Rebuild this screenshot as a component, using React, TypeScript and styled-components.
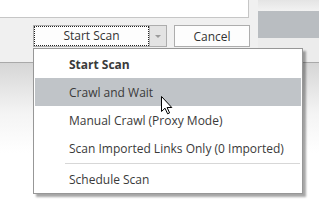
import React from "react";
import styled, { createGlobalStyle } from "styled-components";

const Global = createGlobalStyle`
  html, body { margin: 0; padding: 0; }
  body { width: 319px; height: 209px; overflow: hidden; background: #f0f0f0; }
  #root { width: 319px; height: 209px; }
`;

const Page = styled.div`
  position: relative;
  width: 319px;
  height: 209px;
  display: flex;
  flex-direction: column;
  font-family: "Open Sans", "Noto Sans", sans-serif;
  color: #333;
  overflow: hidden;
`;

const Upper = styled.div`
  display: flex;
  height: 62px;
  background: #f0f0f0;
`;

const MainCol = styled.div`
  width: 258px;
  display: flex;
  flex-direction: column;
`;

const TopPanel = styled.div`
  width: 248px;
  height: 17px;
  background: #fff;
  border-right: 1px solid #c6c6c6;
  border-bottom: 1px solid #c6c6c6;
`;

const ButtonRow = styled.div`
  display: flex;
  gap: 7px;
  margin-top: 7px;
  padding-left: 33px;
`;

const Split = styled.div`
  display: flex;
  height: 20px;
  border: 1px solid #adadad;
`;

const MainBtn = styled.div`
  width: 113px;
  margin: 0;
  border: 1px dotted #222;
  background: #fdfdfd;
  display: flex;
  align-items: center;
  justify-content: center;
  font-size: 12px;
  line-height: 1;
  color: #333;
`;

const ArrowBtn = styled.div`
  width: 16px;
  border-left: 1px solid #adadad;
  background: #e3e3e3;
  display: flex;
  align-items: center;
  justify-content: center;
`;

const Triangle = styled.div`
  width: 0;
  height: 0;
  border-left: 3px solid transparent;
  border-right: 3px solid transparent;
  border-top: 3px solid #9a9a9a;
  margin-top: 1px;
`;

const PlainBtn = styled.div`
  width: 74px;
  height: 20px;
  border: 1px solid #adadad;
  background: #fdfdfd;
  display: flex;
  align-items: center;
  justify-content: center;
  font-size: 12px;
  color: #333;
`;

const SidePanel = styled.div`
  flex: 1;
  display: flex;
  flex-direction: column;
`;

const SideTop = styled.div`
  height: 11px;
  background: linear-gradient(#e4e4e4, #f2f2f2);
`;

const SideBand = styled.div`
  height: 27px;
  background: #b9bdc1;
`;

const SideRest = styled.div`
  flex: 1;
  background: #ececec;
`;

const Lower = styled.div`
  flex: 1;
  border-top: 1px solid #a9a9a9;
  background: linear-gradient(#d6d6d6 0px, #f4f4f4 50px, #ffffff 90px);
`;

const Menu = styled.div`
  position: absolute;
  left: 33px;
  top: 48px;
  width: 266px;
  padding: 1px 1px 0;
  background: #fff;
  border: 1px solid #979797;
  box-shadow: 3px 3px 2px rgba(0, 0, 0, 0.35);
  display: flex;
  flex-direction: column;
`;

const Item = styled.div<{ $bold?: boolean; $active?: boolean }>`
  height: 28px;
  display: flex;
  align-items: center;
  padding-left: 34px;
  font-size: 12px;
  font-weight: ${(p) => (p.$bold ? 700 : 400)};
  color: #3a3a3a;
  background: ${(p) => (p.$active ? "#c0c4c8" : "transparent")};
  white-space: nowrap;
`;

const Separator = styled.div`
  height: 1px;
  margin: 1px 1px 1px 30px;
  background: #d7d7d7;
`;

const Cursor = styled.svg`
  position: absolute;
  left: 161px;
  top: 96px;
`;

export default function App() {
  return (
    <>
      <Global />
      <Page>
        <Upper>
          <MainCol>
            <TopPanel />
            <ButtonRow>
              <Split>
                <MainBtn>Start Scan</MainBtn>
                <ArrowBtn>
                  <Triangle />
                </ArrowBtn>
              </Split>
              <PlainBtn>Cancel</PlainBtn>
            </ButtonRow>
          </MainCol>
          <SidePanel>
            <SideTop />
            <SideBand />
            <SideRest />
          </SidePanel>
        </Upper>
        <Lower />
        <Menu>
          <Item $bold>Start Scan</Item>
          <Item $active>Crawl and Wait</Item>
          <Item>Manual Crawl (Proxy Mode)</Item>
          <Item>Scan Imported Links Only (0 Imported)</Item>
          <Separator />
          <Item>Schedule Scan</Item>
        </Menu>
        <Cursor width="13" height="19" viewBox="0 0 13 19">
          <path
            d="M0.5 0.5 L0.5 15.5 L4 12.2 L6.6 17.8 L8.6 16.9 L6.1 11.5 L10.8 11.5 Z"
            fill="#fff"
            stroke="#000"
            strokeWidth="1"
            strokeLinejoin="miter"
          />
        </Cursor>
      </Page>
    </>
  );
}
